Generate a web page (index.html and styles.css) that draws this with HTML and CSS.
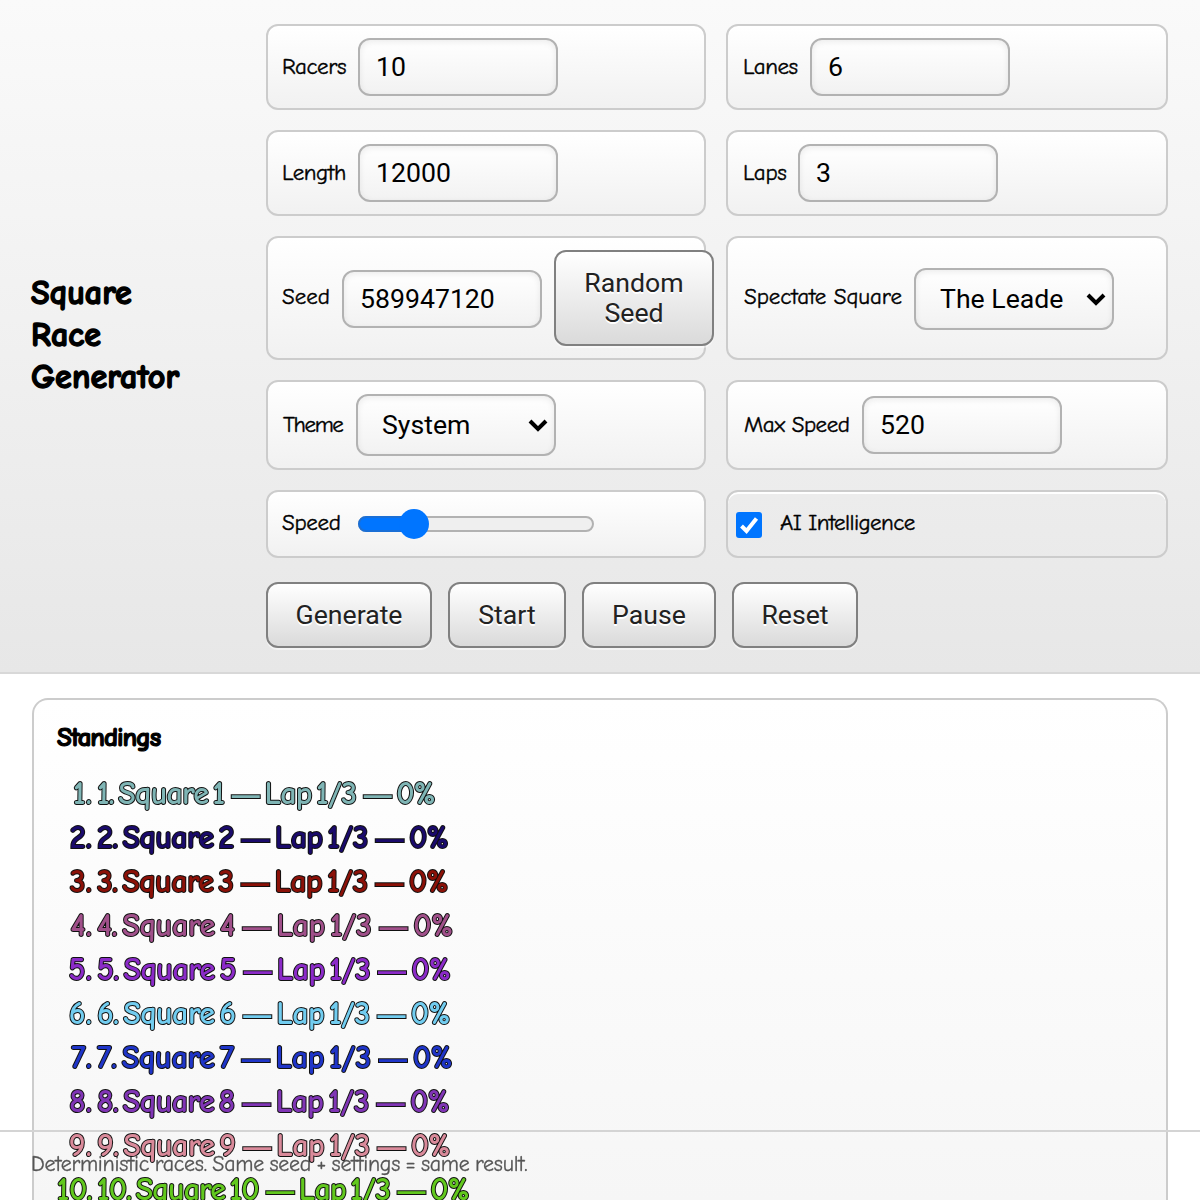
FILE: index.html
```
<!DOCTYPE html>
<html lang="en">
<head>
<meta charset="utf-8">
<title>Square Race Generator</title>
<link rel="stylesheet" href="styles.css">
</head>
<body>
<header class="top">
  <h1 class="title">Square<br>Race<br>Generator</h1>
  <div class="controls">
    <div class="grid">
      <label class="field"><span class="name racers">Racers</span><input class="input" value="10"></label>
      <label class="field"><span class="name lanes">Lanes</span><input class="input" value="6"></label>
      <label class="field"><span class="name racers">Length</span><input class="input" value="12000"></label>
      <label class="field"><span class="name laps">Laps</span><input class="input" value="3"></label>
      <div class="field tall"><span class="name seed-name">Seed</span><input class="input" value="589947120"><button class="btn seed">Random Seed</button></div>
      <div class="field tall"><span class="name spectate">Spectate Square</span><div class="input select"><span class="value">The Leade</span><svg class="chevron" viewBox="0 0 20 14"><path d="M2 3l8 8 8-8"/></svg></div></div>
      <div class="field"><span class="name theme">Theme</span><div class="input select"><span class="value">System</span><svg class="chevron" viewBox="0 0 20 14"><path d="M2 3l8 8 8-8"/></svg></div></div>
      <label class="field"><span class="name max">Max Speed</span><input class="input" value="520"></label>
      <div class="field"><span class="name speed">Speed</span><div class="slider"><div class="fill"></div><div class="thumb"></div></div></div>
      <div class="field check"><span class="box"><svg viewBox="0 0 26 26"><path d="M5.500 14l5 5L20.500 6.500"/></svg></span><span class="name ai">AI Intelligence</span></div>
    </div>
    <div class="buttons"><button class="btn b1">Generate</button><button class="btn b2">Start</button><button class="btn b3">Pause</button><button class="btn b4">Reset</button></div>
  </div>
</header>
<main class="card">
  <h2 class="heading">Standings</h2>
  <div class="list">
    <div class="row c1"><span class="num">1.</span><span class="entry">1. Square 1 <i>—</i> Lap 1/3 <i>—</i> 0%</span></div>
    <div class="row c2"><span class="num">2.</span><span class="entry">2. Square 2 <i>—</i> Lap 1/3 <i>—</i> 0%</span></div>
    <div class="row c3"><span class="num">3.</span><span class="entry">3. Square 3 <i>—</i> Lap 1/3 <i>—</i> 0%</span></div>
    <div class="row c4"><span class="num">4.</span><span class="entry">4. Square 4 <i>—</i> Lap 1/3 <i>—</i> 0%</span></div>
    <div class="row c5"><span class="num">5.</span><span class="entry">5. Square 5 <i>—</i> Lap 1/3 <i>—</i> 0%</span></div>
    <div class="row c6"><span class="num">6.</span><span class="entry">6. Square 6 <i>—</i> Lap 1/3 <i>—</i> 0%</span></div>
    <div class="row c7"><span class="num">7.</span><span class="entry">7. Square 7 <i>—</i> Lap 1/3 <i>—</i> 0%</span></div>
    <div class="row c8"><span class="num">8.</span><span class="entry">8. Square 8 <i>—</i> Lap 1/3 <i>—</i> 0%</span></div>
    <div class="row c9"><span class="num">9.</span><span class="entry">9. Square 9 <i>—</i> Lap 1/3 <i>—</i> 0%</span></div>
    <div class="row c10"><span class="num">10.</span><span class="entry">10. Square 10 <i>—</i> Lap 1/3 <i>—</i> 0%</span></div>
  </div>
</main>
<footer class="foot">Deterministic races. Same seed + settings = same result.</footer>
</body>
</html>
```
FILE: styles.css
```
* { box-sizing: border-box; }
html { overflow: hidden; }
body { display: flex; flex-direction: column; margin: 0; height: 1200px; overflow: hidden; background: #fff; color: #000; font-family: "Comic Neue", "Comic Sans MS", Lato, sans-serif; }
.top { display: flex; flex: none; align-items: center; height: 674px; padding: 24px 32px 24px 31px; background: linear-gradient(#fafafa, #e7e7e7); border-bottom: 2px solid #d8d8d8; }
.title { width: 235px; margin: 0; padding-bottom: 2px; font-size: 34px; line-height: 42px; font-weight: 700; letter-spacing: .1px; -webkit-text-stroke: 1.4px #000; }
.controls { width: 902px; }
.grid { display: grid; grid-template-columns: 440px 442px; grid-template-rows: 86px 86px 124px 90px 68px; gap: 20px; }
.field { display: flex; align-items: center; gap: 12px; padding: 0 14px; border: 2px solid #ccc; border-radius: 12px; background: linear-gradient(#fff, #f1f1f1); box-shadow: inset 0 2px 0 #fff; }
.name { flex: none; padding-bottom: 2px; font-size: 23px; white-space: nowrap; -webkit-text-stroke: .4px #000; }
.racers { width: 64px; letter-spacing: -.43px; }
.lanes { width: 56px; padding-left: 1px; letter-spacing: -.4px; }
.laps { width: 44px; padding-left: 1px; letter-spacing: -.3px; }
.seed-name { width: 48px; padding-bottom: 4px; }
.spectate { width: 160px; padding: 0 0 4px 2px; letter-spacing: -.06px; }
.theme { width: 62px; padding-left: 1px; letter-spacing: -1.4px; }
.max { width: 108px; padding-left: 2px; letter-spacing: -.5px; }
.speed { width: 64px; padding-bottom: 4px; letter-spacing: -.3px; }
.ai { letter-spacing: -.6px; padding-bottom: 4px; }
.input { width: 200px; height: 58px; flex: none; padding: 0 16px; border: 2px solid #b2b2b2; border-radius: 12px; background: linear-gradient(#fff, #f2f2f2); box-shadow: inset 0 2px 6px rgba(0,0,0,.08); font: 26.67px Roboto, sans-serif; }
.tall .input { margin-top: 2px; }
.select { display: flex; height: 62px; align-items: center; justify-content: space-between; padding: 0 6px 0 24px; }
.chevron { width: 20px; height: 14px; fill: none; stroke: #000; stroke-width: 4; }
.btn { height: 66px; padding: 0; border: 2px solid #808080; border-radius: 12px; background: linear-gradient(#fff, #dadada); font: 26.67px/30px Roboto, sans-serif; color: #222; text-shadow: 0 2px 0 #fff; box-shadow: 0 2px 0 rgba(255,255,255,.5); }
.seed { width: 160px; height: 96px; flex: none; }
.slider { position: relative; width: 236px; height: 16px; border: 2px solid #b2b2b2; border-radius: 8px; background: #efefef; }
.fill { width: 58px; height: 16px; margin: -2px; border: 2px solid #1a6fd6; border-radius: 8px; background: #0075ff; }
.thumb { position: absolute; left: 39px; top: -9px; width: 30px; height: 30px; border-radius: 50%; background: #0075ff; }
.check { background: none; padding-left: 8px; gap: 18px; }
.box { width: 26px; height: 26px; margin-top: 2px; border-radius: 3px; background: #0075ff; }
.box svg { display: block; fill: none; stroke: #fff; stroke-width: 4; }
.buttons { display: flex; gap: 16px; margin-top: 24px; }
.b1 { width: 166px; } .b2 { width: 118px; } .b3 { width: 134px; } .b4 { width: 126px; }
.card { flex: 1; min-height: 0; margin: 24px 32px 0; padding: 22px 24px 0 22px; border: 2px solid #ccc; border-bottom: 0; border-radius: 16px 16px 0 0; background: linear-gradient(#fff, #f6f6f6); }
.heading { margin: 0 0 18px 1px; font-size: 27px; line-height: 32px; letter-spacing: -1.1px; -webkit-text-stroke: 1.2px #000; }
.list { position: relative; z-index: 2; }
.row { display: flex; gap: 5px; height: 44px; line-height: 44px; font-size: 32px; font-weight: 700; letter-spacing: -.5px; word-spacing: -6.2px; -webkit-text-stroke: 2px #101010; paint-order: stroke fill; }
.num { width: 36px; flex: none; display: flex; justify-content: flex-end; letter-spacing: .3px; }
.entry { white-space: pre; }
.row i { margin: 0 1px 0 3px; font: 700 28px "Liberation Sans", Arial, sans-serif; }
.c1 { color: #7fb5b5; letter-spacing: -.75px; }
.c2 { color: #1a0a6b; }
.c3 { color: #8b1108; }
.c4 { color: #a0508a; letter-spacing: -.25px; }
.c5 { color: #8b2bc8; }
.c6 { color: #72cdf0; }
.c7 { color: #1f35c8; letter-spacing: -.22px; }
.c8 { color: #8035b5; }
.c9 { color: #d98a9a; }
.c10 { color: #62c81e; letter-spacing: -.8px; }
.c10 .num { letter-spacing: -.5px; }
.foot { position: fixed; left: 0; right: 0; bottom: 0; z-index: 1; height: 70px; padding: 19px 31px; border-top: 2px solid #d4d4d4; color: #555; font-size: 22px; letter-spacing: -.27px; word-spacing: -1.6px; -webkit-text-stroke: .3px #555; }
```
